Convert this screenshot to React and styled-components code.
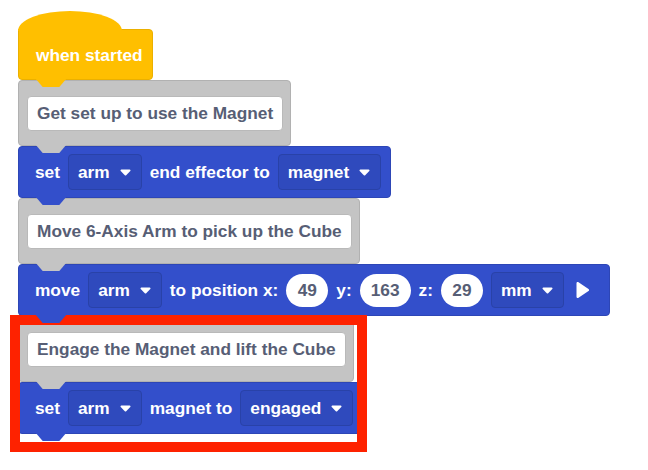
import React from "react";
import styled, { createGlobalStyle } from "styled-components";

const GlobalStyle = createGlobalStyle`
	html, body {
		margin: 0;
		padding: 0;
		background: #fff;
	}
	body {
		font-family: "Liberation Sans", Arial, Helvetica, sans-serif;
	}
`;

const Page = styled.div`
	position: relative;
	width: 648px;
	height: 470px;
	overflow: hidden;
	background: #fff;
`;

const Stack = styled.div`
	display: flex;
	flex-direction: column;
	align-items: flex-start;
	padding: 29px 0 0 18px;
`;

const Block = styled.div`
	position: relative;
	box-sizing: border-box;
	display: flex;
	align-items: center;
	gap: 8px;
	background: ${(p) => p.$fill};
	border: 1px solid ${(p) => p.$edge};
	border-radius: 4px;
	color: #fff;
	font-size: 17.3px;
	font-weight: 700;
	white-space: nowrap;

	&::after {
		content: "";
		position: absolute;
		z-index: 2;
		left: 16px;
		top: calc(100% - 1px);
		width: 32px;
		height: 9px;
		background: ${(p) => p.$fill};
		clip-path: polygon(0 0, 100% 0, 76% 100%, 24% 100%);
	}
`;

const Hat = styled(Block)`
	height: 51px;
	padding: 2px 9px 0 17px;
	border-top-left-radius: 0;

	&::before {
		content: "";
		position: absolute;
		left: -1px;
		top: -19px;
		width: 104px;
		height: 20px;
		background: ${(p) => p.$fill};
		border-radius: 50% 50% 0 0 / 100% 100% 0 0;
	}
`;

const CommentBlock = styled(Block)`
	height: 66px;
	padding: 1px 7px 0 8px;
`;

const CommentText = styled.div`
	box-sizing: border-box;
	height: 35px;
	line-height: 33px;
	padding: 0 9px;
	background: #fff;
	border: 1px solid #b9b9b9;
	border-radius: 4px;
	color: #575e75;
	font-size: 17.3px;
	font-weight: 700;
`;

const CommandBlock = styled(Block)`
	height: 52px;
	padding: 0 9px 0 16px;
`;

const Dropdown = styled.div`
	box-sizing: border-box;
	display: flex;
	align-items: center;
	gap: 10px;
	height: 36px;
	padding: 0 10px 0 9px;
	background: #2f4abd;
	border: 1px solid #2942a8;
	border-radius: 4px;
	color: #fff;
`;

const NumberField = styled.div`
	box-sizing: border-box;
	height: 33px;
	line-height: 33px;
	padding: 0 11px;
	min-width: 42px;
	text-align: center;
	background: #fff;
	border-radius: 17px;
	color: #575e75;
`;

const PlayIcon = styled.svg`
	margin: 0 10px 0 4px;
	display: block;
`;

const Highlight = styled.div`
	position: absolute;
	left: 10px;
	top: 315px;
	width: 357px;
	height: 137px;
	box-sizing: border-box;
	border: 10px solid #fe2200;
	pointer-events: none;
`;

const Caret = () => (
	<svg width="11" height="7" viewBox="0 0 11 7">
		<path
			d="M1.4 0.5h8.2c0.8 0 1.2 0.9 0.7 1.5l-4.1 4.3c-0.4 0.4-1 0.4-1.4 0L0.7 2C0.2 1.4 0.6 0.5 1.4 0.5z"
			fill="#fff"
		/>
	</svg>
);

const Menu = ({ children }) => (
	<Dropdown>
		{children}
		<Caret />
	</Dropdown>
);

const BLUE = "#334fcb";
const BLUE_EDGE = "#2d46b6";
const GRAY = "#c4c4c4";
const GRAY_EDGE = "#b1b1b1";

const App = () => {
	return (
		<Page>
			<GlobalStyle />
			<Stack>
				<Hat $fill="#ffbf00" $edge="#ebb000">
					when started
				</Hat>

				<CommentBlock $fill={GRAY} $edge={GRAY_EDGE}>
					<CommentText>Get set up to use the Magnet</CommentText>
				</CommentBlock>

				<CommandBlock $fill={BLUE} $edge={BLUE_EDGE}>
					set
					<Menu>arm</Menu>
					end effector to
					<Menu>magnet</Menu>
				</CommandBlock>

				<CommentBlock $fill={GRAY} $edge={GRAY_EDGE}>
					<CommentText>Move 6-Axis Arm to pick up the Cube</CommentText>
				</CommentBlock>

				<CommandBlock $fill={BLUE} $edge={BLUE_EDGE}>
					move
					<Menu>arm</Menu>
					to position x:
					<NumberField>49</NumberField>
					y:
					<NumberField>163</NumberField>
					z:
					<NumberField>29</NumberField>
					<Menu>mm</Menu>
					<PlayIcon width="14" height="18" viewBox="0 0 14 18">
						<path
							d="M2.5 1.2C1.6 0.6 0.5 1.2 0.5 2.3v13.4c0 1.1 1.1 1.7 2 1.1l10-6.7c0.8-0.5 0.8-1.7 0-2.2z"
							fill="#fff"
						/>
					</PlayIcon>
				</CommandBlock>

				<CommentBlock $fill={GRAY} $edge={GRAY_EDGE}>
					<CommentText>Engage the Magnet and lift the Cube</CommentText>
				</CommentBlock>

				<CommandBlock $fill={BLUE} $edge={BLUE_EDGE}>
					set
					<Menu>arm</Menu>
					magnet to
					<Menu>engaged</Menu>
				</CommandBlock>
			</Stack>
			<Highlight />
		</Page>
	);
};

export default App;
